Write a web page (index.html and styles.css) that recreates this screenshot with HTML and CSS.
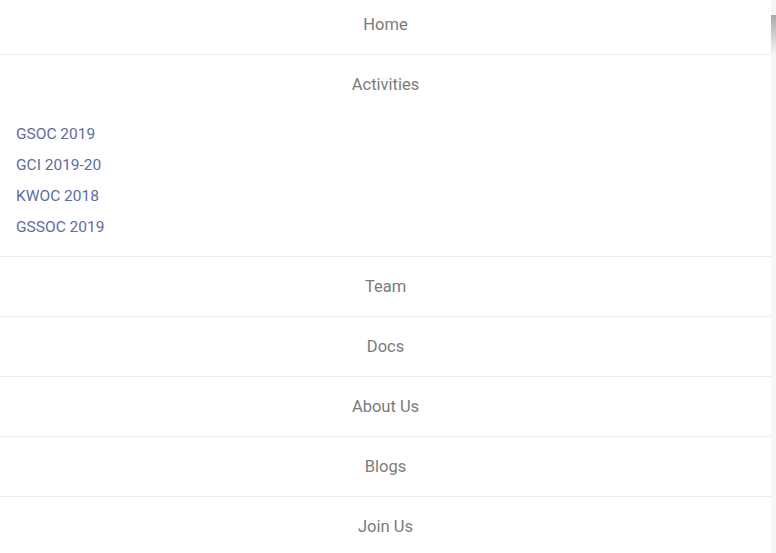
FILE: index.html
```html
<!DOCTYPE html>
<html lang="en">
<head>
<meta charset="utf-8">
<title>Menu</title>
<link rel="stylesheet" href="styles.css">
</head>
<body>
<div class="page">
  <nav class="menu">
    <div class="item"><a class="item-link" href="#">Home</a></div>
    <div class="item">
      <a class="item-link" href="#">Activities</a>
      <ul class="sub">
        <li><a href="#">GSOC 2019</a></li>
        <li><a href="#">GCI 2019-20</a></li>
        <li><a href="#">KWOC 2018</a></li>
        <li><a href="#">GSSOC 2019</a></li>
      </ul>
    </div>
    <div class="item"><a class="item-link" href="#">Team</a></div>
    <div class="item"><a class="item-link" href="#">Docs</a></div>
    <div class="item"><a class="item-link" href="#">About Us</a></div>
    <div class="item"><a class="item-link" href="#">Blogs</a></div>
    <div class="item"><a class="item-link" href="#">Join Us</a></div>
  </nav>
  <div class="rail"><div class="thumb"></div></div>
</div>
</body>
</html>
```
FILE: styles.css
```css
html, body {
  margin: 0;
  padding: 0;
  background: #ffffff;
  height: 100%;
  overflow: hidden;
}
body {
  font-family: Roboto, "Liberation Sans", sans-serif;
  font-size: 16.5px;
}
.page {
  display: flex;
  height: 553px;
}
.menu {
  flex: 1;
  margin-top: -5px;
}
.item {
  border-bottom: 1px solid #eaecf4;
}
.item-link {
  display: block;
  height: 59px;
  line-height: 59px;
  text-align: center;
  color: #7b7b7b;
  text-decoration: none;
}
.sub {
  list-style: none;
  margin: 0;
  padding: 4px 0 14px 16px;
}
.sub li {
  height: 31px;
  line-height: 31px;
}
.sub a {
  color: #5e6d9c;
  text-decoration: none;
  font-size: 15.5px;
}
.rail {
  width: 5px;
  background: #f6f6f6;
  padding-top: 15px;
}
.thumb {
  height: 40px;
  background: linear-gradient(#a9a9a9, #f6f6f6);
}
```
